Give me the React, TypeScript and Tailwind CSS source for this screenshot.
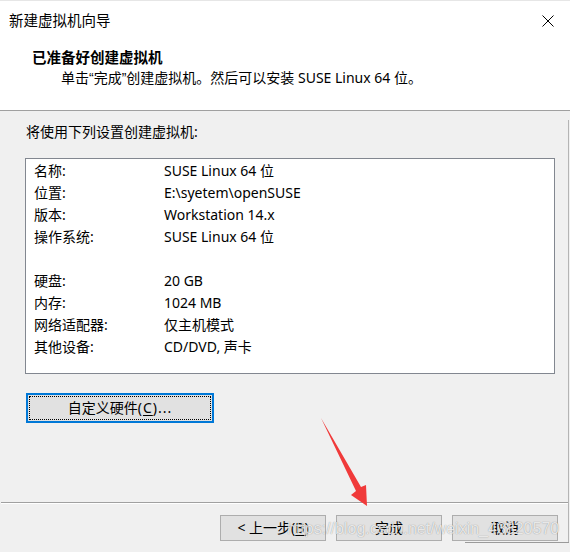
import React from "react";

const rows: [string, string][] = [
  ["名称:", "SUSE Linux 64 位"],
  ["位置:", "E:\\syetem\\openSUSE"],
  ["版本:", "Workstation 14.x"],
  ["操作系统:", "SUSE Linux 64 位"],
  ["", ""],
  ["硬盘:", "20 GB"],
  ["内存:", "1024 MB"],
  ["网络适配器:", "仅主机模式"],
  ["其他设备:", "CD/DVD, 声卡"],
];

const font = "font-['Noto_Sans','Noto_Sans_CJK_SC',sans-serif]";

export default function App() {
  return (
    <div className={`relative w-[570px] h-[552px] overflow-hidden bg-[#f0f0f0] text-black ${font} text-[14px]`}>
      {/* header */}
      <div className="h-[111px] bg-white border-b border-[#a0a0a0] border-t border-t-[#e6e6e6] flex flex-col">
        <div className="h-[38px] flex items-center justify-between pl-[9px] pr-[16px]">
          <span className="text-[14.5px] leading-none">新建虚拟机向导</span>
          <svg width="12" height="12" viewBox="0 0 12 12" className="mt-[1px]">
            <path d="M0.5 0.5 L11.5 11.5 M11.5 0.5 L0.5 11.5" stroke="#000" strokeWidth="1" />
          </svg>
        </div>
        <div className="pl-[32px] pt-[8px] font-bold text-[14.5px] leading-[20px]">已准备好创建虚拟机</div>
        <div className="pl-[61px] pt-[1px] text-[14px] leading-[20px]">
          单击<span className="font-['Liberation_Sans',sans-serif]">“</span>完成<span className="font-['Liberation_Sans',sans-serif]">”</span>创建虚拟机。然后可以安装 SUSE Linux 64 位。
        </div>
      </div>

      {/* body */}
      <div className="pl-[25px] pt-[11px] flex flex-col">
        <div className="pl-[1px] leading-[20px] h-[20px]">将使用下列设置创建虚拟机:</div>
        <div className="mt-[16px] w-[530px] h-[216px] bg-white border border-[#828790] pt-[1px] pl-[8px]">
          {rows.map(([k, v], i) => (
            <div key={i} className="flex h-[22px] items-center leading-none">
              <span className="w-[130px] shrink-0">{k}</span>
              <span>{v}</span>
            </div>
          ))}
        </div>
        <div className="mt-[19px] ml-[1px] w-[188px] h-[30px] border-2 border-[#0078d7] bg-[#e1e1e1] p-[1px]">
          <div className="w-full h-full border border-dotted border-black flex items-center justify-center leading-none pb-[1px]">
            自定义硬件<span className="tracking-[1px]">(<span className="underline underline-offset-2">C</span>)...</span>
          </div>
        </div>
      </div>

      {/* separator */}
      <div className="absolute left-[1px] right-[2px] top-[502px] h-[2px] border-t border-[#a0a0a0] border-b border-b-white" />

      {/* bottom buttons */}
      <div className="absolute top-[515px] right-[12px] flex gap-[10px]">
        <div className="w-[106px] h-[26px] border border-[#adadad] bg-[#e1e1e1] flex items-center justify-center leading-none">
          &lt; 上一步(<span className="underline underline-offset-2">B</span>)
        </div>
        <div className="w-[106px] h-[26px] border border-[#adadad] bg-[#e1e1e1] flex items-center justify-center leading-none">
          完成
        </div>
        <div className="w-[106px] h-[26px] border border-[#adadad] bg-[#e1e1e1] flex items-center justify-center leading-none">
          取消
        </div>
      </div>

      {/* screenshot artifacts */}
      <div className="absolute left-[568px] top-[120px] w-[1px] h-[423px] bg-[#b4b4b4]" />
      <div className="absolute left-[465px] top-[542px] w-[104px] h-[1px] bg-[#9a9a9a]" />

      {/* red arrow */}
      <svg className="absolute left-0 top-0 pointer-events-none" width="570" height="552">
        <polygon
          points="321,418 361,487 366,485 367,506 351,495 356,491"
          fill="#f03a3a"
        />
      </svg>

      {/* watermark */}
      <div className="absolute left-[287px] top-[519px] text-[16px] leading-[20px] font-['Liberation_Sans',sans-serif] text-white/80 [text-shadow:0_0_1px_rgba(0,0,0,0.45)] whitespace-nowrap pointer-events-none">
        https://blog.csdn.net/weixin_43820570
      </div>
    </div>
  );
}
